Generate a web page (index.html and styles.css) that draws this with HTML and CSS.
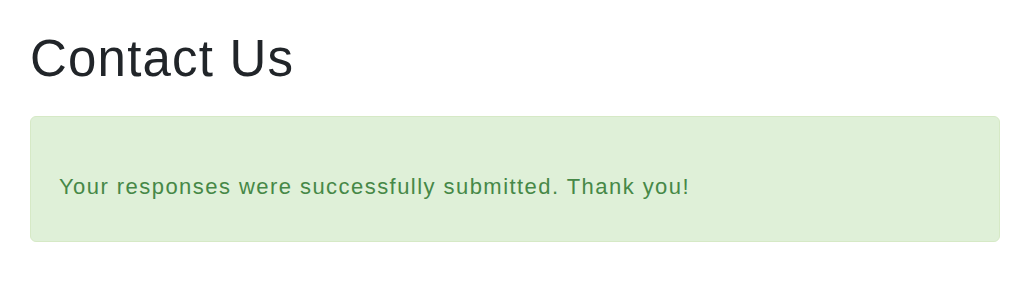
FILE: index.html
```html
<!DOCTYPE html>
<html lang="en">
<head>
<meta charset="utf-8">
<title>Contact Us</title>
<link rel="stylesheet" href="styles.css">
</head>
<body>
<main class="page">
  <h1 class="title">Contact Us</h1>
  <div class="alert alert-success">
    <p class="alert-text">Your responses were successfully submitted. Thank you!</p>
  </div>
</main>
</body>
</html>
```

FILE: styles.css
```css
html, body {
  margin: 0;
  padding: 0;
  background: #ffffff;
}

body {
  font-family: "Liberation Sans", Arial, sans-serif;
  color: #212529;
}

.page {
  display: flex;
  flex-direction: column;
  padding: 29px 24px 0 30px;
}

.title {
  margin: 0 0 27px 0;
  font-size: 51px;
  font-weight: 400;
  line-height: 60px;
  letter-spacing: 1.2px;
  color: #212529;
}

.alert {
  border: 1px solid #d6e9c6;
  border-radius: 6px;
  padding: 53px 28px 38px 28px;
}

.alert-success {
  background: #dff0d8;
  color: #468847;
}

.alert-text {
  margin: 0;
  font-size: 22px;
  line-height: 33px;
  letter-spacing: 1.45px;
}
```
